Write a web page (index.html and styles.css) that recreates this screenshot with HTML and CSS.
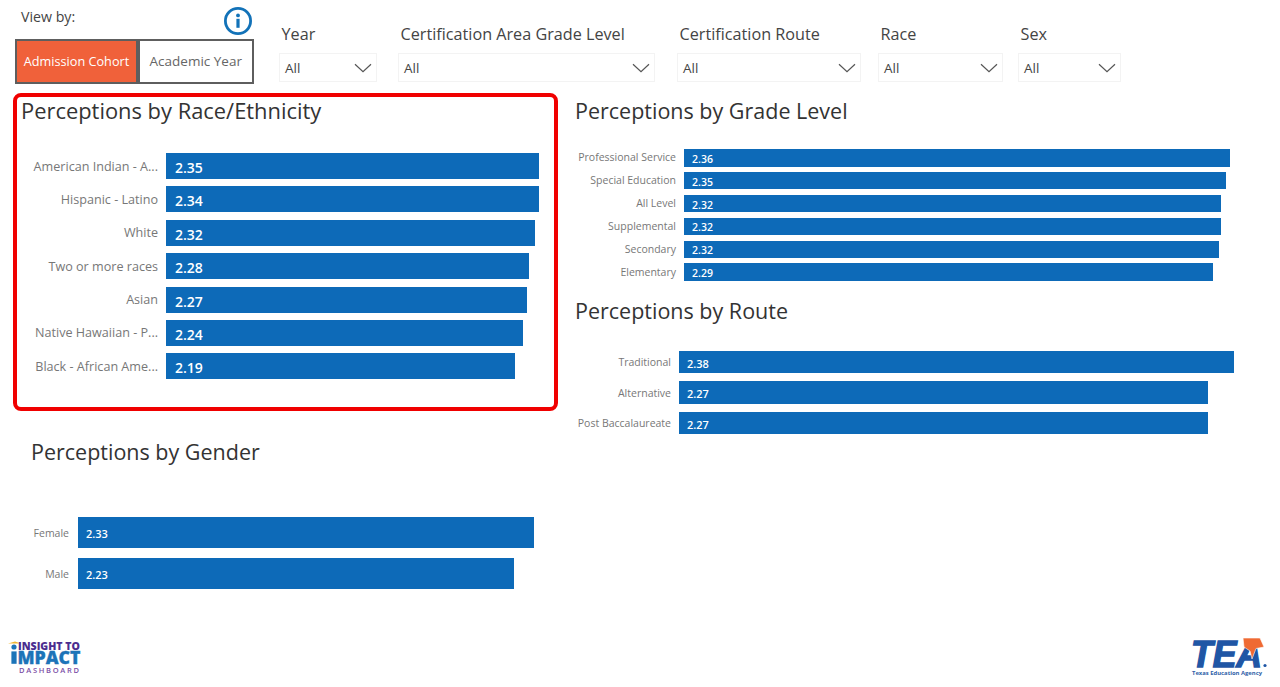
FILE: index.html
```html
<!DOCTYPE html>
<html lang="en">
<head>
<meta charset="utf-8">
<title>Perceptions dashboard</title>
<link rel="stylesheet" href="styles.css">
</head>
<body>
<div class="page">
  <header class="header">
    <div class="view">
      <div class="view-top">
        <span class="view-label">View by:</span>
        <svg class="info" width="30" height="30" viewBox="0 0 30 30" aria-hidden="true">
          <circle cx="15" cy="15" r="12.6" fill="#fff" stroke="#1272b8" stroke-width="2.8"/>
          <circle cx="15" cy="9.4" r="1.9" fill="#1272b8"/>
          <rect x="13.4" y="12.8" width="3.2" height="9" fill="#1272b8"/>
        </svg>
      </div>
      <div class="toggle">
        <div class="toggle-btn active">Admission Cohort</div>
        <div class="toggle-btn">Academic Year</div>
      </div>
    </div>
    <div class="filter f-year">
      <div class="filter-label">Year</div>
      <div class="select"><span>All</span><svg class="chev" width="18" height="10" viewBox="0 0 18 10"><path d="M1 1.2 9 8.6 17 1.2" fill="none" stroke="#555" stroke-width="1.2"/></svg></div>
    </div>
    <div class="filter f-area">
      <div class="filter-label">Certification Area Grade Level</div>
      <div class="select"><span>All</span><svg class="chev" width="18" height="10" viewBox="0 0 18 10"><path d="M1 1.2 9 8.6 17 1.2" fill="none" stroke="#555" stroke-width="1.2"/></svg></div>
    </div>
    <div class="filter f-route">
      <div class="filter-label">Certification Route</div>
      <div class="select"><span>All</span><svg class="chev" width="18" height="10" viewBox="0 0 18 10"><path d="M1 1.2 9 8.6 17 1.2" fill="none" stroke="#555" stroke-width="1.2"/></svg></div>
    </div>
    <div class="filter f-race">
      <div class="filter-label">Race</div>
      <div class="select"><span>All</span><svg class="chev" width="18" height="10" viewBox="0 0 18 10"><path d="M1 1.2 9 8.6 17 1.2" fill="none" stroke="#555" stroke-width="1.2"/></svg></div>
    </div>
    <div class="filter f-sex">
      <div class="filter-label">Sex</div>
      <div class="select"><span>All</span><svg class="chev" width="18" height="10" viewBox="0 0 18 10"><path d="M1 1.2 9 8.6 17 1.2" fill="none" stroke="#555" stroke-width="1.2"/></svg></div>
    </div>
  </header>

  <main class="columns">
    <div class="col-left">
      <section class="race-card">
        <h2 class="title title-race">Perceptions by Race/Ethnicity</h2>
        <div class="chart race">
          <div class="row"><span class="label">American Indian - A...</span><div class="bar" style="width:373px"><span>2.35</span></div></div>
          <div class="row"><span class="label">Hispanic - Latino</span><div class="bar" style="width:372.5px"><span>2.34</span></div></div>
          <div class="row"><span class="label">White</span><div class="bar" style="width:369px"><span>2.32</span></div></div>
          <div class="row"><span class="label">Two or more races</span><div class="bar" style="width:363px"><span>2.28</span></div></div>
          <div class="row"><span class="label">Asian</span><div class="bar" style="width:361px"><span>2.27</span></div></div>
          <div class="row"><span class="label">Native Hawaiian - P...</span><div class="bar" style="width:357px"><span>2.24</span></div></div>
          <div class="row"><span class="label">Black - African Ame...</span><div class="bar" style="width:349px"><span>2.19</span></div></div>
        </div>
      </section>
      <section class="gender-block">
        <h2 class="title">Perceptions by Gender</h2>
        <div class="chart gender">
          <div class="row"><span class="label">Female</span><div class="bar" style="width:456px"><span>2.33</span></div></div>
          <div class="row"><span class="label">Male</span><div class="bar" style="width:436px"><span>2.23</span></div></div>
        </div>
      </section>
    </div>
    <div class="col-right">
      <section>
        <h2 class="title">Perceptions by Grade Level</h2>
        <div class="chart grade">
          <div class="row"><span class="label">Professional Service</span><div class="bar" style="width:546px"><span>2.36</span></div></div>
          <div class="row"><span class="label">Special Education</span><div class="bar" style="width:542px"><span>2.35</span></div></div>
          <div class="row"><span class="label">All Level</span><div class="bar" style="width:537px"><span>2.32</span></div></div>
          <div class="row"><span class="label">Supplemental</span><div class="bar" style="width:536.5px"><span>2.32</span></div></div>
          <div class="row"><span class="label">Secondary</span><div class="bar" style="width:535px"><span>2.32</span></div></div>
          <div class="row"><span class="label">Elementary</span><div class="bar" style="width:529px"><span>2.29</span></div></div>
        </div>
      </section>
      <section class="route-block">
        <h2 class="title">Perceptions by Route</h2>
        <div class="chart route">
          <div class="row"><span class="label">Traditional</span><div class="bar" style="width:555px"><span>2.38</span></div></div>
          <div class="row"><span class="label">Alternative</span><div class="bar" style="width:529px"><span>2.27</span></div></div>
          <div class="row"><span class="label">Post Baccalaureate</span><div class="bar" style="width:529px"><span>2.27</span></div></div>
        </div>
      </section>
    </div>
  </main>

  <footer class="footer">
    <svg class="logo-insight" width="76" height="36" viewBox="0 0 76 36" role="img" aria-label="Insight to Impact Dashboard">
      <path d="M0 3.4 7 1.6 13 3.4Z" fill="#f0b632"/>
      <circle cx="6" cy="7" r="2.6" fill="#1c74b8"/>
      <text class="ins-1" x="10" y="10" textLength="62" lengthAdjust="spacingAndGlyphs">INSIGHT TO</text>
      <rect x="3.4" y="11.4" width="5.2" height="12.4" fill="#1c74b8"/>
      <text class="ins-2" x="9.5" y="23.8" textLength="63" lengthAdjust="spacingAndGlyphs">MPACT</text>
      <text class="ins-3" x="11" y="32.5" textLength="60" lengthAdjust="spacing">DASHBOARD</text>
    </svg>
    <svg class="logo-tea" width="78" height="46" viewBox="0 -6 78 46" role="img" aria-label="Texas Education Agency">
      <text class="tea-1" x="1" y="30" textLength="71" lengthAdjust="spacingAndGlyphs">TEA</text>
      <path d="M53 1 70 1 74 10 66 11.5 62 22 60 14 54 10Z" fill="#ef6a33" stroke="#fff" stroke-width=".6"/>
      <circle cx="75" cy="28.5" r="1.6" fill="#1f56a5"/>
      <text class="tea-2" x="2" y="37.5" textLength="70" lengthAdjust="spacingAndGlyphs">Texas Education Agency</text>
    </svg>
  </footer>
</div>
</body>
</html>
```

FILE: styles.css
```css
* { box-sizing: border-box; }
html, body { margin: 0; padding: 0; background: #fff; }
body { font-family: "Open Sans", "Noto Sans", sans-serif; color: #333; }
.page { width: 1280px; height: 687px; overflow: hidden; }

.header { display: flex; height: 93px; padding-left: 15px; }
.view { width: 239px; margin-right: 25px; }
.view-top { display: flex; justify-content: space-between; height: 39px; padding: 6px 1px 0 6px; }
.view-label { font-size: 14.2px; line-height: 22px; color: #444; }
.info { display: block; margin-top: 0; }
.toggle { display: flex; height: 45px; border: 2.5px solid #5e5e5e; background: #5e5e5e; gap: 3.5px; }
.toggle-btn { display: flex; align-items: center; justify-content: center; padding-bottom: 2px; background: #fff; color: #666; font-size: 13.5px; flex: 1 1 0; }
.toggle-btn.active { background: #f0613a; color: #fff; flex: 0 0 119px; font-size: 12.7px; }

.filter { padding-top: 23px; }
.f-year { width: 98px; margin-right: 21px; }
.f-area { width: 257px; margin-right: 22px; }
.f-route { width: 184px; margin-right: 17px; }
.f-race { width: 125px; margin-right: 15px; }
.f-sex { width: 103px; }
.filter-label { height: 22px; line-height: 22px; margin-bottom: 8px; padding-left: 2.5px; font-size: 16.2px; color: #444; white-space: nowrap; }
.select { display: flex; align-items: center; justify-content: space-between; height: 29px; padding: 1px 4px 0 5px; border: 1px solid #f3f3f3; font-size: 13.5px; color: #444; }
.select span { line-height: 27px; padding-top: 1px; }

.columns { display: grid; grid-template-columns: 545px 1fr; column-gap: 17px; padding-left: 13px; height: 496px; }
.col-right { padding-top: 4px; }
.title { margin: 0; font-size: 21.5px; line-height: 28px; font-weight: 400; color: #333; white-space: nowrap; }
.title-race { font-size: 21.9px; }

.race-card { height: 318px; border: 4px solid #f00000; border-radius: 8px; padding-left: 4px; }
.gender-block { margin-top: 27px; padding-left: 18px; }
.route-block { margin-top: 16px; }

.chart { display: flex; flex-direction: column; }
.row { display: flex; align-items: center; }
.label { flex: none; text-align: right; color: #777; white-space: nowrap; }
.bar { display: flex; align-items: center; height: 100%; background: #0d6ab8; color: #fff; }

.race { margin-top: 28px; gap: 7.4px; }
.race .row { height: 26px; }
.race .label { width: 137px; margin-right: 8px; font-size: 12.6px; }
.race .bar { padding: 3px 0 0 9px; font-size: 14px; font-weight: 600; }

.grade { margin-top: 24px; gap: 5.4px; }
.grade .row { height: 17.5px; }
.grade .label { width: 101px; margin-right: 8px; font-size: 10.5px; padding-bottom: 1px; }
.grade .bar { padding: 2px 0 0 8px; font-size: 10.5px; font-weight: 600; }

.route { margin-top: 26px; gap: 8px; }
.route .row { height: 22.5px; }
.route .label { width: 96px; margin-right: 8px; font-size: 10.5px; }
.route .bar { padding: 2px 0 0 8px; font-size: 11px; font-weight: 600; }

.gender { margin-top: 51px; gap: 10px; }
.gender .row { height: 31px; }
.gender .label { width: 38px; margin-right: 9px; font-size: 10.5px; }
.gender .bar { padding: 1px 0 0 8px; font-size: 11px; font-weight: 600; }

.footer { display: flex; justify-content: space-between; align-items: flex-start; padding: 0 12px 0 8px; margin-top: 48px; }
.logo-insight { display: block; margin-top: 3px; }
.logo-tea { display: block; margin-top: -6px; }
.ins-1 { font: 800 10.5px "Open Sans", sans-serif; fill: #4b2d8f; }
.ins-2 { font: 800 16.8px "Open Sans", sans-serif; fill: #1c74b8; stroke: #1c74b8; stroke-width: .3px; }
.ins-3 { font: 600 7.5px "Open Sans", sans-serif; fill: #7b4ea6; }
.tea-1 { font: italic 700 36px "Liberation Sans", sans-serif; fill: #1f56a5; stroke: #1f56a5; stroke-width: 1.4px; }
.tea-2 { font: 700 6px "Open Sans", sans-serif; fill: #2f5fa8; }
```
